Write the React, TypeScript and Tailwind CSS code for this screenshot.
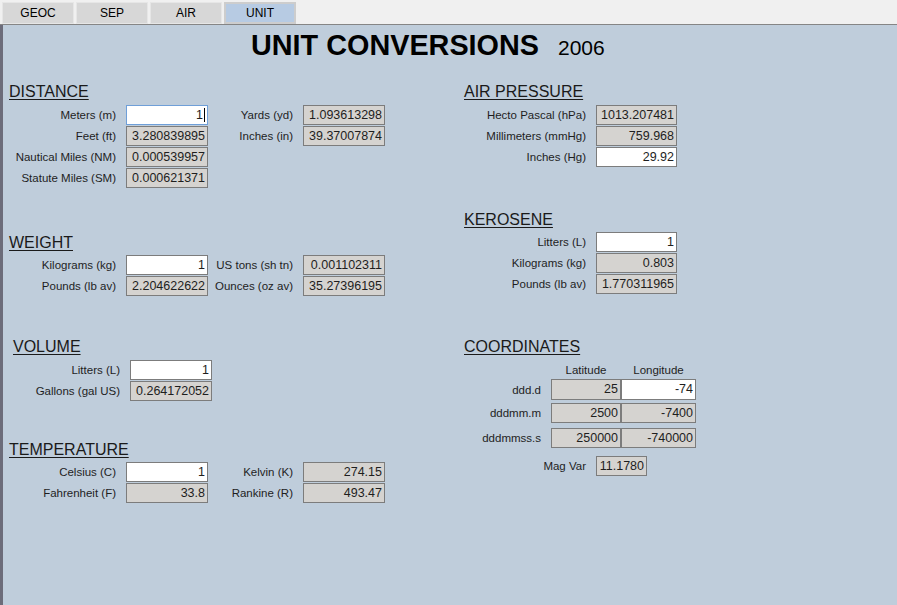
import React from "react";

const FONT = { fontFamily: '"Liberation Sans", Arial, sans-serif' };

function Box({
  value,
  w = "w-[82px]",
  h = "h-[20px]",
  white = false,
  focus = false,
}: {
  value: string;
  w?: string;
  h?: string;
  white?: boolean;
  focus?: boolean;
}) {
  return (
    <div
      className={`${w} ${h} shrink-0 flex items-center justify-end pr-[2px] text-[12.5px] text-[#1e1e1e] border ${
        focus ? "border-[#6f9fd8]" : "border-[#7c7c7c]"
      } ${white ? "bg-white" : "bg-[#d5d3d0]"}`}
    >
      <span>{value}</span>
      {focus && <span className="ml-[1px] w-[1px] h-[14px] bg-black" />}
    </div>
  );
}

function Label({ text, w }: { text: string; w: string }) {
  return (
    <div className={`${w} shrink-0 text-right pr-[10px] text-[11.5px] leading-[20px] text-[#1e1e1e] whitespace-nowrap`}>
      {text}
    </div>
  );
}

function Heading({ text }: { text: string }) {
  return (
    <div className="h-[18px] text-[16px] leading-[22px] text-[#1a1a1a] underline underline-offset-[2px] whitespace-nowrap">
      {text}
    </div>
  );
}

type Row = { l1: string; v1: string; w1?: boolean; f1?: boolean; l2?: string; v2?: string; w2?: boolean };

function LeftRows({ rows }: { rows: Row[] }) {
  return (
    <div className="flex flex-col gap-[1px]">
      {rows.map((r, i) => (
        <div key={i} className="flex h-[20px] items-center">
          <Label text={r.l1} w="w-[117px]" />
          <Box value={r.v1} white={r.w1} focus={r.f1} />
          {r.l2 !== undefined && (
            <>
              <Label text={r.l2} w="w-[95px]" />
              <Box value={r.v2 || ""} white={r.w2} />
            </>
          )}
        </div>
      ))}
    </div>
  );
}

function RightRows({ rows }: { rows: { l: string; v: string; white?: boolean }[] }) {
  return (
    <div className="flex flex-col gap-[1px]">
      {rows.map((r, i) => (
        <div key={i} className="flex h-[20px] items-center">
          <Label text={r.l} w="w-[132px]" />
          <Box value={r.v} w="w-[81px]" white={r.white} />
        </div>
      ))}
    </div>
  );
}

function Tab({ text, active = false }: { text: string; active?: boolean }) {
  return (
    <div
      className={`w-[72px] h-[22px] mt-[2px] flex items-center justify-center text-[12px] text-black ${
        active ? "bg-[#b7cbe3] border-2 border-[#cdcdcd]" : "bg-[#d7d7d7] border border-[#e6e6e6]"
      }`}
    >
      {text}
    </div>
  );
}

export default function App() {
  return (
    <div className="w-[897px] h-[605px] flex flex-col overflow-hidden" style={FONT}>
      {/* tab bar */}
      <div className="h-[25px] shrink-0 bg-[#f0f0f0] border-b border-[#858585] flex pl-[2px] gap-[2px]">
        <Tab text="GEOC" />
        <Tab text="SEP" />
        <Tab text="AIR" />
        <Tab text="UNIT" active />
      </div>

      {/* panel */}
      <div className="flex-1 bg-[#bfcddb] border-l-[3px] border-[#6c6c7a] flex flex-col">
        <div className="mt-[4px] h-[32px] flex items-baseline ml-[248px] text-black">
          <span className="text-[28.8px] leading-[32px] font-bold">UNIT CONVERSIONS</span>
          <span className="ml-[19px] text-[21px] leading-[32px]">2006</span>
        </div>

        <div className="mt-[20px] flex">
          {/* left column */}
          <div className="ml-[6px] w-[455px] flex flex-col">
            <div>
              <Heading text="DISTANCE" />
              <div className="mt-[6px]">
                <LeftRows
                  rows={[
                    { l1: "Meters (m)", v1: "1", w1: true, f1: true, l2: "Yards (yd)", v2: "1.093613298" },
                    { l1: "Feet (ft)", v1: "3.280839895", l2: "Inches (in)", v2: "39.37007874" },
                    { l1: "Nautical Miles (NM)", v1: "0.000539957" },
                    { l1: "Statute Miles (SM)", v1: "0.000621371" },
                  ]}
                />
              </div>
            </div>

            <div className="mt-[44px]">
              <Heading text="WEIGHT" />
              <div className="mt-[5px]">
                <LeftRows
                  rows={[
                    { l1: "Kilograms (kg)", v1: "1", w1: true, l2: "US tons (sh tn)", v2: "0.001102311" },
                    { l1: "Pounds (lb av)", v1: "2.204622622", l2: "Ounces (oz av)", v2: "35.27396195" },
                  ]}
                />
              </div>
            </div>

            <div className="mt-[40px] ml-[4px]">
              <Heading text="VOLUME" />
              <div className="mt-[6px]">
                <LeftRows
                  rows={[
                    { l1: "Litters (L)", v1: "1", w1: true },
                    { l1: "Gallons (gal US)", v1: "0.264172052" },
                  ]}
                />
              </div>
            </div>

            <div className="mt-[38px]">
              <Heading text="TEMPERATURE" />
              <div className="mt-[5px]">
                <LeftRows
                  rows={[
                    { l1: "Celsius (C)", v1: "1", w1: true, l2: "Kelvin (K)", v2: "274.15" },
                    { l1: "Fahrenheit (F)", v1: "33.8", l2: "Rankine (R)", v2: "493.47" },
                  ]}
                />
              </div>
            </div>
          </div>

          {/* right column */}
          <div className="flex flex-col">
            <div>
              <Heading text="AIR PRESSURE" />
              <div className="mt-[6px]">
                <RightRows
                  rows={[
                    { l: "Hecto Pascal (hPa)", v: "1013.207481" },
                    { l: "Millimeters (mmHg)", v: "759.968" },
                    { l: "Inches (Hg)", v: "29.92", white: true },
                  ]}
                />
              </div>
            </div>

            <div className="mt-[42px]">
              <Heading text="KEROSENE" />
              <div className="mt-[5px]">
                <RightRows
                  rows={[
                    { l: "Litters (L)", v: "1", white: true },
                    { l: "Kilograms (kg)", v: "0.803" },
                    { l: "Pounds (lb av)", v: "1.770311965" },
                  ]}
                />
              </div>
            </div>

            <div className="mt-[42px]">
              <Heading text="COORDINATES" />
              <div className="mt-[8px] h-[14px] flex text-[11.5px] leading-[16px] text-[#1e1e1e]">
                <div className="w-[87px]" />
                <div className="w-[70px] text-center">Latitude</div>
                <div className="w-[75px] text-center">Longitude</div>
              </div>
              <div className="mt-[3px] flex h-[21px] items-center">
                <Label text="ddd.d" w="w-[87px]" />
                <Box value="25" w="w-[70px]" h="h-[21px]" />
                <Box value="-74" w="w-[75px]" h="h-[21px]" white />
              </div>
              <div className="mt-[3px] flex h-[20px] items-center">
                <Label text="dddmm.m" w="w-[87px]" />
                <Box value="2500" w="w-[70px]" />
                <Box value="-7400" w="w-[75px]" />
              </div>
              <div className="mt-[5px] flex h-[20px] items-center">
                <Label text="dddmmss.s" w="w-[87px]" />
                <Box value="250000" w="w-[70px]" />
                <Box value="-740000" w="w-[75px]" />
              </div>
              <div className="mt-[8px] flex h-[20px] items-center">
                <Label text="Mag Var" w="w-[132px]" />
                <Box value="11.1780" w="w-[51px]" />
              </div>
            </div>
          </div>
        </div>
      </div>
    </div>
  );
}
